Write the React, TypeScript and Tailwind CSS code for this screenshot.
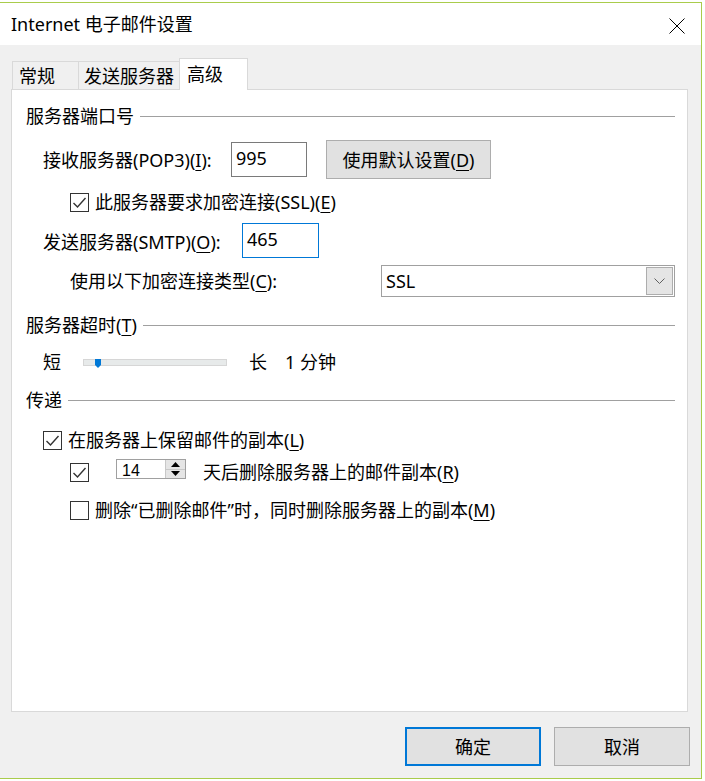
import React from "react";

const U: React.FC<{ children: React.ReactNode }> = ({ children }) => (
  <span className="underline underline-offset-[3px] decoration-1">{children}</span>
);

const CheckBox: React.FC<{ checked?: boolean }> = ({ checked }) => (
  <span className="w-[19px] h-[19px] shrink-0 border border-[#333333] bg-white flex">
    {checked && (
      <svg width="17" height="17" viewBox="0 0 17 17">
        <path d="M2.5 9 L6.5 13 L14.5 4" stroke="#333333" strokeWidth="1.4" fill="none" />
      </svg>
    )}
  </span>
);

const GroupHeader: React.FC<{ children: React.ReactNode }> = ({ children }) => (
  <div className="flex items-center h-[20px] pl-[14px] pr-[12px]">
    <span className="whitespace-nowrap">{children}</span>
    <div className="flex-1 h-px bg-[#a0a0a0] ml-[6px]" />
  </div>
);

export default function App() {
  return (
    <div className="w-[705px] h-[781px] bg-white overflow-hidden font-['Noto_Sans','Noto_Sans_CJK_SC',sans-serif] text-[18px] leading-[20px] text-black">
      <div className="mt-[2px] w-[702px] h-[777px] border-t border-r border-b border-[#a9cc4c] flex flex-col">
        {/* title bar */}
        <div className="h-[42px] bg-white flex items-center justify-between pl-[11px] pr-[16px] shrink-0">
          <span className="text-[18px] -mt-[1px]">Internet 电子邮件设置</span>
          <svg width="16" height="16" viewBox="0 0 16 16" className="mt-[3px]">
            <path d="M0.5 0.5 L15.5 15.5 M15.5 0.5 L0.5 15.5" stroke="#000" strokeWidth="1" />
          </svg>
        </div>

        {/* body */}
        <div className="flex-1 bg-[#f0f0f0] flex flex-col">
          <div className="mt-[13px] h-[31px] flex items-end pl-[12px]">
            <div className="w-[67px] h-[28px] border-l border-t border-r border-[#d9d9d9] pl-[6px] pt-[4px]">
              常规
            </div>
            <div className="w-[100px] h-[28px] border-t border-[#d9d9d9] pl-[5px] pt-[4px]">
              发送服务器
            </div>
            <div className="relative z-10 w-[69px] h-[32px] -mb-px bg-white border-l border-t border-r border-[#d9d9d9] pl-[7px] pt-[5px]">
              高级
            </div>
          </div>

          <div className="ml-[11px] w-[677px] h-[623px] bg-white border border-[#d9d9d9] flex flex-col">
            <div className="mt-[16px]">
              <GroupHeader>服务器端口号</GroupHeader>
            </div>

            <div className="mt-[14px] h-[39px] flex items-center pl-[31px]">
              <span className="w-[188px] shrink-0 whitespace-nowrap">
                接收服务器(POP3)(<U>I</U>):
              </span>
              <div className="w-[76px] h-[35px] border border-[#7a7a7a] bg-white pl-[4px] pt-[4px] text-[18px] leading-[22px]">
                995
              </div>
              <button className="ml-[19px] w-[165px] h-[39px] bg-[#e1e1e1] border border-[#adadad] text-[18px]">
                使用默认设置(<U>D</U>)
              </button>
            </div>

            <div className="mt-[13px] h-[20px] flex items-center pl-[58px]">
              <CheckBox checked />
              <span className="ml-[6px] whitespace-nowrap">
                此服务器要求加密连接(SSL)(<U>E</U>)
              </span>
            </div>

            <div className="mt-[11px] h-[35px] flex items-center pl-[31px]">
              <span className="w-[199px] shrink-0 whitespace-nowrap mt-[2px]">
                发送服务器(SMTP)(<U>O</U>):
              </span>
              <div className="w-[77px] h-[35px] border border-[#0078d7] bg-white pl-[4px] pt-[4px] text-[18px] leading-[22px]">
                465
              </div>
            </div>

            <div className="mt-[7px] h-[32px] flex items-center pl-[58px] pr-[12px]">
              <span className="w-[311px] shrink-0 whitespace-nowrap">
                使用以下加密连接类型(<U>C</U>):
              </span>
              <div className="flex-1 h-[32px] border border-[#a0a0a0] bg-white flex items-center justify-between pl-[4px] pr-[1px]">
                <span className="text-[18px]">SSL</span>
                <div className="w-[27px] h-[28px] bg-[#e5e5e5] border border-[#adadad] flex items-center justify-center">
                  <svg width="11" height="7" viewBox="0 0 11 7">
                    <path d="M0.5 0.5 L5.5 5.5 L10.5 0.5" stroke="#606060" strokeWidth="1" fill="none" />
                  </svg>
                </div>
              </div>
            </div>

            <div className="mt-[18px]">
              <GroupHeader>
                服务器超时(<U>T</U>)
              </GroupHeader>
            </div>

            <div className="mt-[17px] h-[20px] flex items-center pl-[31px]">
              <span className="w-[40px] shrink-0">短</span>
              <div className="relative w-[144px] h-[7px] bg-[#e7eaea] border border-[#d6d6d6]">
                <svg width="6" height="9" viewBox="0 0 6 9" className="absolute left-[11px] -top-[1px]">
                  <path d="M0 0 H6 V6 L3 9 L0 6 Z" fill="#0078d7" />
                </svg>
              </div>
              <span className="ml-[22px]">长</span>
              <span className="ml-[18px] whitespace-nowrap">1 分钟</span>
            </div>

            <div className="mt-[18px]">
              <GroupHeader>传递</GroupHeader>
            </div>

            <div className="mt-[20px] h-[20px] flex items-center pl-[31px]">
              <CheckBox checked />
              <span className="ml-[6px] whitespace-nowrap">
                在服务器上保留邮件的副本(<U>L</U>)
              </span>
            </div>

            <div className="mt-[9px] h-[25px] flex items-start pl-[58px]">
              <div className="mt-[4px]">
                <CheckBox checked />
              </div>
              <div className="ml-[27px] w-[70px] h-[20px] border border-[#a0a0a0] bg-white flex">
                <span className="flex-1 pl-[5px] font-['Liberation_Sans',sans-serif] text-[16px] leading-[19px] pt-[1px]">
                  14
                </span>
                <div className="w-[20px] flex flex-col border-l border-[#c8c8c8] bg-[#e5e5e5]">
                  <div className="flex-1 flex items-center justify-center border-b border-[#c8c8c8]">
                    <svg width="9" height="5" viewBox="0 0 9 5">
                      <path d="M0 5 L4.5 0 L9 5 Z" fill="#000" />
                    </svg>
                  </div>
                  <div className="flex-1 flex items-center justify-center">
                    <svg width="9" height="5" viewBox="0 0 9 5">
                      <path d="M0 0 L4.5 5 L9 0 Z" fill="#000" />
                    </svg>
                  </div>
                </div>
              </div>
              <span className="ml-[17px] mt-[3px] whitespace-nowrap">
                天后删除服务器上的邮件副本(<U>R</U>)
              </span>
            </div>

            <div className="mt-[16px] h-[20px] flex items-center pl-[58px]">
              <CheckBox />
              <span className="ml-[6px] whitespace-nowrap">
                删除“已删除邮件”时，同时删除服务器上的副本(<U>M</U>)
              </span>
            </div>
          </div>

          <div className="mt-[15px] flex justify-end gap-[13px] pr-[11px]">
            <button className="w-[136px] h-[39px] bg-[#e1e1e1] border-2 border-[#0078d7] text-[18px]">
              确定
            </button>
            <button className="w-[136px] h-[39px] bg-[#e1e1e1] border border-[#adadad] text-[18px]">
              取消
            </button>
          </div>
        </div>
      </div>
    </div>
  );
}
